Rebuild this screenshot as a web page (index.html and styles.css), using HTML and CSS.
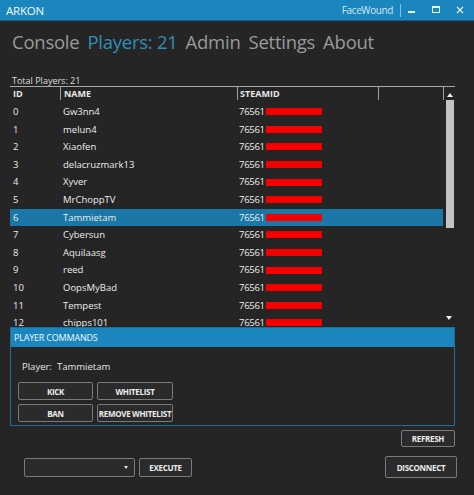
FILE: index.html
```html
<!DOCTYPE html>
<html>
<head>
<meta charset="utf-8">
<link rel="stylesheet" href="styles.css">
</head>
<body>
<div class="window">
  <div class="titlebar">
    <span class="app">ARKON</span>
    <div class="tb-right">
      <span class="user">FaceWound</span>
      <span class="sep"></span>
      <svg class="tbicon first" width="10" height="10" viewBox="0 0 10 10"><rect x="1" y="6" width="7" height="2" fill="#e6f2f8"/></svg>
      <svg class="tbicon" width="10" height="10" viewBox="0 0 10 10"><rect x="1.5" y="1.5" width="7" height="6" fill="none" stroke="#e6f2f8" stroke-width="1"/><rect x="1.5" y="1.5" width="7" height="1.5" fill="#e6f2f8"/></svg>
      <svg class="tbicon" width="10" height="10" viewBox="0 0 10 10"><path d="M2 2 L8 8 M8 2 L2 8" stroke="#e6f2f8" stroke-width="1.1"/></svg>
    </div>
  </div>

  <nav class="tabs">
    <span class="tab">Console</span>
    <span class="tab active">Players: 21</span>
    <span class="tab">Admin</span>
    <span class="tab">Settings</span>
    <span class="tab">About</span>
  </nav>

  <div class="content">
    <div class="total">Total Players: 21</div>
    <div class="grid">
      <div class="head">
        <div class="c id">ID</div>
        <div class="c name">NAME</div>
        <div class="c steam">STEAMID</div>
        <div class="c extra"></div>
        <div class="c sbhead"><span class="up"></span></div>
      </div>
      <div class="body">
        <div class="rows">
          <div class="row"><div class="c id">0</div><div class="c name">Gw3nn4</div><div class="c steam">76561<span class="redact"></span></div></div>
          <div class="row"><div class="c id">1</div><div class="c name">melun4</div><div class="c steam">76561<span class="redact"></span></div></div>
          <div class="row"><div class="c id">2</div><div class="c name">Xiaofen</div><div class="c steam">76561<span class="redact"></span></div></div>
          <div class="row"><div class="c id">3</div><div class="c name">delacruzmark13</div><div class="c steam">76561<span class="redact"></span></div></div>
          <div class="row"><div class="c id">4</div><div class="c name">Xyver</div><div class="c steam">76561<span class="redact"></span></div></div>
          <div class="row"><div class="c id">5</div><div class="c name">MrChoppTV</div><div class="c steam">76561<span class="redact"></span></div></div>
          <div class="row sel"><div class="c id">6</div><div class="c name">Tammietam</div><div class="c steam">76561<span class="redact"></span></div></div>
          <div class="row"><div class="c id">7</div><div class="c name">Cybersun</div><div class="c steam">76561<span class="redact"></span></div></div>
          <div class="row"><div class="c id">8</div><div class="c name">Aquilaasg</div><div class="c steam">76561<span class="redact"></span></div></div>
          <div class="row"><div class="c id">9</div><div class="c name">reed</div><div class="c steam">76561<span class="redact"></span></div></div>
          <div class="row"><div class="c id">10</div><div class="c name">OopsMyBad</div><div class="c steam">76561<span class="redact"></span></div></div>
          <div class="row"><div class="c id">11</div><div class="c name">Tempest</div><div class="c steam">76561<span class="redact"></span></div></div>
          <div class="row"><div class="c id">12</div><div class="c name">chipps101</div><div class="c steam">76561<span class="redact"></span></div></div>
        </div>
        <div class="scrollbar">
          <div class="thumb"></div>
          <span class="down"></span>
        </div>
      </div>
    </div>

    <div class="panel">
      <div class="panel-head">PLAYER COMMANDS</div>
      <div class="panel-body">
        <div class="player"><span class="plabel">Player:</span><span>Tammietam</span></div>
        <div class="btns">
          <button class="btn">KICK</button>
          <button class="btn">WHITELIST</button>
          <button class="btn">BAN</button>
          <button class="btn">REMOVE WHITELIST</button>
        </div>
      </div>
    </div>

    <div class="refresh-row"><button class="btn refresh">REFRESH</button></div>

    <div class="bottom">
      <div class="left">
        <div class="combo"><span class="caret"></span></div>
        <button class="btn execute">EXECUTE</button>
      </div>
      <button class="btn disconnect">DISCONNECT</button>
    </div>
  </div>
</div>
</body>
</html>
```

FILE: styles.css
```css
* { box-sizing: border-box; }
html, body { margin: 0; padding: 0; }
body {
  width: 474px;
  height: 495px;
  background: #252525;
  font-family: "Open Sans", "Noto Sans", sans-serif;
  color: #e6e6e6;
  overflow: hidden;
}
.window { width: 474px; height: 495px; display: flex; flex-direction: column; }

.titlebar {
  height: 20px;
  background: #1b86bd;
  display: flex;
  align-items: center;
  justify-content: space-between;
  padding: 0 9px 0 6px;
  box-shadow: 0 1px 0 #1a5f82;
}
.app { font-size: 11.5px; color: #f2f8fb; letter-spacing: -0.2px; }
.tb-right { display: flex; align-items: center; }
.user { font-size: 10px; color: #cfe6f2; letter-spacing: -0.4px; }
.sep { width: 1px; height: 13px; background: #7fc0df; margin: 0 0 0 7px; }
.tbicon { margin-left: 14px; }
.tbicon.first { margin-left: 6px; }

.tabs {
  display: flex;
  gap: 8px;
  padding: 9px 0 0 12px;
  height: 70px;
  font-size: 18.5px;
  letter-spacing: -0.25px;
}
.tab { color: #9a9a9a; line-height: 26px; height: 26px; }
.tab.active { color: #2f8dba; }

.content { padding: 0 19px 0 10px; margin-top: -14px; }
.total { font-size: 9px; color: #dedede; padding-left: 2px; height: 10px; line-height: 10px; }

.grid { width: 445px; }
.head {
  display: flex;
  height: 14px;
  border-top: 1px solid #a8a8a8;
  font-size: 9px;
  font-weight: 700;
  color: #e8e8e8;
}
.c { flex: none; white-space: nowrap; overflow: hidden; }
.id { width: 50px; padding-left: 3px; }
.name { width: 177px; padding-left: 3px; }
.steam { width: 141px; padding-left: 2px; display: flex; align-items: center; }
.extra { width: 65px; }
.head .c { line-height: 13px; }
.head .name, .head .steam, .head .extra, .head .sbhead { border-left: 1px solid #a0a0a0; }
.sbhead { width: 12px; position: relative; }
.up { position: absolute; left: 3px; top: 6px; width: 0; height: 0; border-left: 3px solid transparent; border-right: 3px solid transparent; border-bottom: 4px solid #f0f0f0; }

.body { display: flex; height: 227px; }
.rows { width: 433px; padding-top: 3px; overflow: hidden; }
.row { display: flex; height: 17.6px; align-items: center; font-size: 9.5px; color: #ececec; }
.row .c { line-height: 17.6px; }
.row.sel { background: #1a77a6; }
.row .steam { letter-spacing: -0.3px; }
.redact { display: inline-block; width: 56px; height: 7px; background: #f40000; margin-left: 1px; }

.scrollbar { width: 12px; position: relative; }
.thumb { position: absolute; left: 3px; top: 0; width: 8px; height: 128px; background: #c4c4c4; }
.down { position: absolute; left: 3px; top: 216px; width: 0; height: 0; border-left: 3px solid transparent; border-right: 3px solid transparent; border-top: 4px solid #f0f0f0; }

.panel { width: 445px; height: 99px; border: 1px solid #1f6f93; }
.panel-head { height: 19px; background: #1b86bd; font-size: 9px; color: #f0f6fa; padding-left: 3px; line-height: 19px; letter-spacing: -0.2px; }
.panel-body { padding: 13px 0 0 7px; }
.player { font-size: 9.5px; color: #e6e6e6; height: 14px; line-height: 14px; display: flex; }
.plabel { width: 39px; padding-left: 4px; }
.btns { display: grid; grid-template-columns: 75px 76px; gap: 4px 4px; margin-top: 8px; }
.btn {
  font-family: "Open Sans", "Noto Sans", sans-serif;
  background: #2b2b2b;
  border: 1px solid #7a7a7a;
  border-radius: 2px;
  color: #ececec;
  font-size: 8px;
  font-weight: 700;
  height: 18px;
  padding: 0;
  letter-spacing: -0.3px;
}
.refresh-row { display: flex; justify-content: flex-end; padding-top: 4px; }
.refresh { width: 54px; height: 17px; }
.bottom { display: flex; justify-content: space-between; align-items: flex-start; margin-top: 9px; padding-left: 14px; }
.left { display: flex; gap: 4px; margin-top: 2px; }
.combo { width: 111px; height: 19px; border: 1px solid #7a7a7a; border-radius: 2px; background: #2b2b2b; position: relative; }
.caret { position: absolute; right: 6px; top: 7px; border-left: 2.5px solid transparent; border-right: 2.5px solid transparent; border-top: 3px solid #e0e0e0; }
.execute { width: 53px; height: 19px; }
.disconnect { width: 72px; height: 22px; margin-right: -2px; }
```
